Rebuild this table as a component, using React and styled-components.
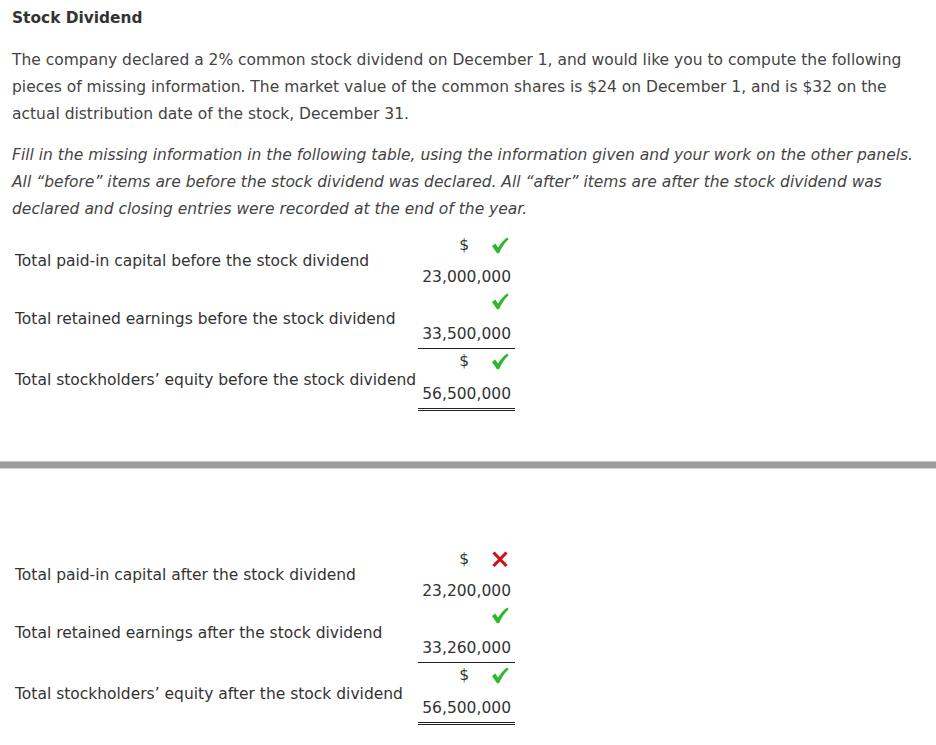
import React from "react";
import styled, { createGlobalStyle } from "styled-components";

const GlobalStyle = createGlobalStyle`
  html, body {
    margin: 0;
    padding: 0;
    background: #fff;
  }
  body {
    font-family: "DejaVu Sans", Verdana, sans-serif;
    color: #333;
  }
`;

const before = [
  { label: "Total paid-in capital before the stock dividend", value: "23,000,000", dollar: true, mark: "ok" },
  { label: "Total retained earnings before the stock dividend", value: "33,500,000", mark: "ok", line: "single" },
  { label: "Total stockholders\u2019 equity before the stock dividend", value: "56,500,000", dollar: true, mark: "ok", line: "double" },
];

const after = [
  { label: "Total paid-in capital after the stock dividend", value: "23,200,000", dollar: true, mark: "bad" },
  { label: "Total retained earnings after the stock dividend", value: "33,260,000", mark: "ok", line: "single" },
  { label: "Total stockholders\u2019 equity after the stock dividend", value: "56,500,000", dollar: true, mark: "ok", line: "double" },
];

function Check() {
  return (
    <svg width="18" height="17" viewBox="0 0 18 17">
      <path
        d="M1 9 L4.2 6.6 L7 10.4 C9.5 6.5 12.5 3 16.2 0.4 L17.6 2.2 C13.8 5.6 10.8 10.2 8 16.2 L6 16.2 Z"
        fill="#2db82d"
      />
    </svg>
  );
}

function Cross() {
  return (
    <svg width="18" height="17" viewBox="0 0 18 17">
      <path d="M2.5 1.5 L15.5 15 M15.5 1.5 L2.5 15" stroke="#c8151b" strokeWidth="3.2" strokeLinecap="butt" />
    </svg>
  );
}

function AnswerTable({ rows }) {
  return (
    <Table>
      {rows.map((row, i) => (
        <Row key={i}>
          <Label>{row.label}</Label>
          <Cell>
            <MarkLine>
              {row.dollar && <Dollar>$</Dollar>}
              {row.mark === "ok" ? <Check /> : <Cross />}
            </MarkLine>
            <Amount line={row.line}>{row.value}</Amount>
          </Cell>
        </Row>
      ))}
    </Table>
  );
}

export default function App() {
  return (
    <Page>
      <GlobalStyle />
      <Title>Stock Dividend</Title>
      <Intro>
        The company declared a 2% common stock dividend on December 1, and would like you to compute the following
        <br />
        pieces of missing information. The market value of the common shares is $24 on December 1, and is $32 on the
        <br />
        actual distribution date of the stock, December 31.
      </Intro>
      <Instructions>
        Fill in the missing information in the following table, using the information given and your work on the other panels.
        <br />
        All &ldquo;before&rdquo; items are before the stock dividend was declared. All &ldquo;after&rdquo; items are after the stock dividend was
        <br />
        declared and closing entries were recorded at the end of the year.
      </Instructions>
      <AnswerTable rows={before} />
      <Divider />
      <Lower>
        <AnswerTable rows={after} />
      </Lower>
    </Page>
  );
}

const Page = styled.div`
  width: 936px;
  padding: 8px 0 20px;
`;

const Title = styled.h1`
  margin: 0 0 0 12px;
  font-size: 15.4px;
  font-weight: bold;
  line-height: 20px;
  color: #333;
`;

const Intro = styled.p`
  margin: 19px 0 0 12px;
  font-size: 15.5px;
  line-height: 27px;
  color: #444;
  white-space: nowrap;
`;

const Instructions = styled(Intro)`
  margin-top: 14px;
  font-style: italic;
`;

const Table = styled.div`
  margin: 10px 0 0 15px;
  display: flex;
  flex-direction: column;
`;

const Row = styled.div`
  display: grid;
  grid-template-columns: 403px 97px;
  align-items: center;
`;

const Label = styled.div`
  font-size: 15.5px;
  line-height: 20px;
  color: #333;
  white-space: nowrap;
`;

const Cell = styled.div`
  display: flex;
  flex-direction: column;
`;

const MarkLine = styled.div`
  height: 24px;
  display: flex;
  align-items: center;
  justify-content: flex-end;
  gap: 22px;
  padding-right: 6px;
`;

const Dollar = styled.span`
  font-size: 15.5px;
  color: #333;
`;

const Amount = styled.div`
  font-size: 15.5px;
  line-height: 22px;
  color: #333;
  text-align: right;
  padding: ${(p) => (p.line ? "10px 4px 3px 0" : "9px 4px 1px 0")};
  border-bottom: ${(p) =>
    p.line === "double" ? "3px double #222" : p.line === "single" ? "1px solid #222" : "none"};
`;

const Divider = styled.div`
  margin-top: 50px;
  height: 6px;
  background: #9b9b9b;
  border-top: 1px solid #c6c6c6;
  border-bottom: 1px solid #d4d4d4;
`;

const Lower = styled.div`
  padding-top: 68px;
`;
